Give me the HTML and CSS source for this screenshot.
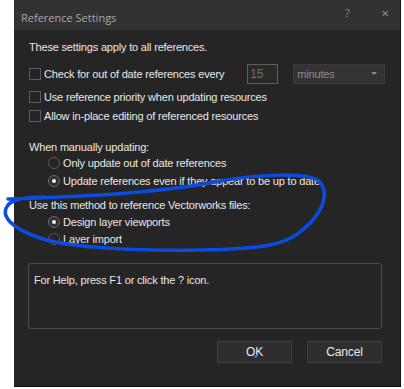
FILE: index.html
```html
<!DOCTYPE html>
<html>
<head>
<meta charset="utf-8">
<link rel="stylesheet" href="styles.css">
</head>
<body>
<div class="dialog">
  <div class="titlebar">
    <span class="title">Reference Settings</span>
    <span class="tbtn help">?</span>
    <span class="tbtn close">&#x2715;</span>
  </div>
  <div class="content">
    <div class="line intro">These settings apply to all references.</div>
    <div class="row row1">
      <span class="check"></span><span class="label">Check for out of date references every</span>
      <span class="numbox">15</span>
      <span class="select"><span>minutes</span><span class="arrow"></span></span>
    </div>
    <div class="row row2"><span class="check"></span><span class="label">Use reference priority when updating resources</span></div>
    <div class="row row3"><span class="check"></span><span class="label">Allow in-place editing of referenced resources</span></div>
    <div class="line head1">When manually updating:</div>
    <div class="row radiorow r1"><span class="radio"></span><span class="rlabel">Only update out of date references</span></div>
    <div class="row radiorow r2"><span class="radio on"></span><span class="rlabel">Update references even if they appear to be up to date</span></div>
    <div class="line head2">Use this method to reference Vectorworks files:</div>
    <div class="row radiorow r3"><span class="radio on"></span><span class="rlabel">Design layer viewports</span></div>
    <div class="row radiorow r4"><span class="radio"></span><span class="rlabel">Layer import</span></div>
    <div class="helpbox">For Help, press F1 or click the ? icon.</div>
    <div class="buttons">
      <span class="btn ok">OK<span class="dot"></span></span>
      <span class="btn">Cancel</span>
    </div>
  </div>
</div>
<svg class="scribble" width="404" height="389" viewBox="0 0 404 389">
  <path d="M 8 199 C 60 197, 150 195, 220 181 C 260 174, 310 172, 320 182 C 330 195, 322 215, 300 232 C 285 245, 260 249, 200 250 C 140 251, 70 248, 40 238 C 10 228, 0 215, 8 205 C 14 198, 30 197, 45 197" fill="none" stroke="#0a4be0" stroke-width="3.5" stroke-linecap="round" stroke-linejoin="round"/>
</svg>
</body>
</html>
```
FILE: styles.css
```css
html, body {
  margin: 0;
  padding: 0;
  background: #ffffff;
  width: 404px;
  height: 389px;
  overflow: hidden;
}
.dialog {
  margin-left: 14px;
  width: 386px;
  height: 386px;
  background: #252525;
  border-right: 1px solid #0e0e0e;
  border-bottom: 1px solid #0e0e0e;
  font-family: "Liberation Sans", Arial, sans-serif;
  font-size: 11px;
  letter-spacing: -0.18px;
  color: #e8e8e8;
}
.titlebar {
  height: 30px;
  background: #323232;
  display: flex;
  align-items: center;
  position: relative;
  letter-spacing: 0;
}
.title {
  font-family: "Open Sans", "Noto Sans", sans-serif;
  font-size: 11px;
  color: #a8a8a8;
  margin-left: 7px;
  margin-top: 4px;
}
.tbtn {
  color: #8a8a8a;
  font-family: "Open Sans", sans-serif;
  font-size: 11px;
  position: absolute;
  top: 5px;
}
.help { left: 331px; }
.close { left: 367px; font-size: 10px; top: 6px; }
.content {
  padding-left: 15px;
  padding-top: 9px;
}
.line { height: 16px; line-height: 16px; }
.row {
  display: flex;
  align-items: center;
  height: 16px;
  line-height: 16px;
}
.row1 { margin-top: 8px; height: 21px; }
.row2 { margin-top: 5px; }
.row3 { margin-top: 3px; }
.head1 { margin-top: 15px; }
.r1 { margin-top: 0; }
.r2 { margin-top: 2px; }
.head2 { margin-top: 8px; }
.r3 { margin-top: 1px; }
.r4 { margin-top: 1px; }
.check {
  width: 10px;
  height: 10px;
  border: 1px solid #5c5c5c;
  box-sizing: content-box;
  margin-right: 3px;
  flex: none;
}
.label { white-space: nowrap; }
.numbox {
  margin-left: 23px;
  width: 27px;
  height: 18px;
  border: 1px solid #5e5e5e;
  background: #2a2a2a;
  color: #6f6f6f;
  font-size: 12px;
  line-height: 18px;
  padding-left: 2px;
  box-sizing: content-box;
  flex: none;
}
.select {
  margin-left: 15px;
  width: 87px;
  height: 18px;
  border: 1px solid #3a3a3a;
  background: #333333;
  color: #8f8f8f;
  line-height: 18px;
  padding-left: 3px;
  display: flex;
  justify-content: space-between;
  align-items: center;
  box-sizing: content-box;
  flex: none;
}
.arrow {
  width: 0;
  height: 0;
  border-left: 3px solid transparent;
  border-right: 3px solid transparent;
  border-top: 3px solid #8a8a8a;
  margin-right: 7px;
}
.radiorow { padding-left: 19px; }
.radio {
  width: 10px;
  height: 10px;
  border: 1px solid #5a5a5a;
  border-radius: 50%;
  margin-right: 3px;
  flex: none;
  position: relative;
  box-sizing: content-box;
}
.radio.on { background: #303030; border-color: #6a6a6a; }
.radio.on::after {
  content: "";
  position: absolute;
  left: 3px;
  top: 3px;
  width: 4px;
  height: 4px;
  border-radius: 50%;
  background: #f0f0f0;
}
.helpbox {
  margin-top: 16px;
  border: 1px solid #4a4a4a;
  border-radius: 3px;
  padding: 9px 0 0 5px;
  box-sizing: border-box;
  height: 66px;
  width: 354px;
  margin-left: -1px;
  line-height: 14px;
}
.buttons {
  margin-top: 12px;
  display: flex;
  gap: 15px;
  padding-left: 188px;
}
.btn {
  width: 75px;
  height: 22px;
  box-sizing: border-box;
  border: 1px solid #3e3e3e;
  background: #2e2e2e;
  display: flex;
  align-items: center;
  justify-content: center;
  font-size: 12px;
  color: #eaeaea;
  position: relative;
}
.dot {
  position: absolute;
  left: 36px;
  top: 13px;
  width: 3px;
  height: 3px;
  background: #1a5cff;
}
.scribble {
  position: absolute;
  left: 0;
  top: 0;
  pointer-events: none;
}
```
